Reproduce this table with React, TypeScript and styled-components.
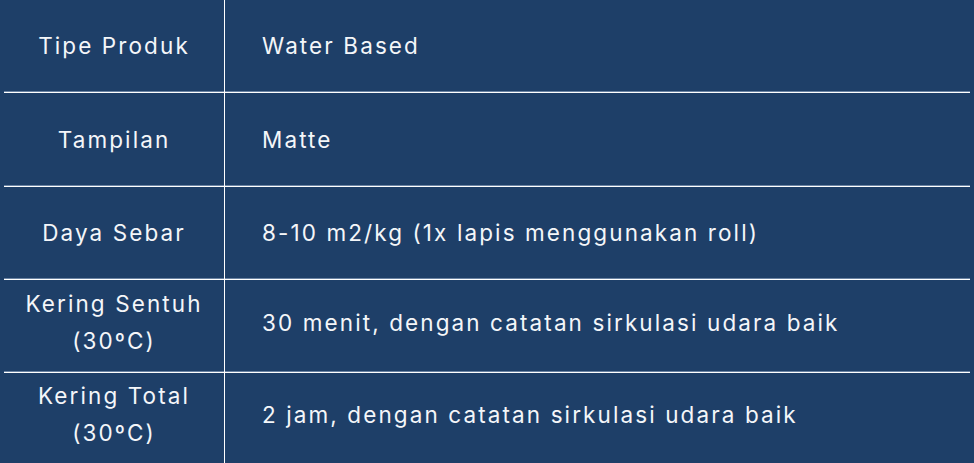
import React from "react";
import styled, { createGlobalStyle } from "styled-components";

const GlobalStyle = createGlobalStyle`
    html, body {
        margin: 0;
        padding: 0;
        background: #1e3f68;
    }
    body {
        font-family: Inter, "Open Sans", sans-serif;
    }
`;

const Page = styled.div`
    width: 974px;
    height: 463px;
    overflow: hidden;
    background: #1e3f68;
    padding-left: 4px;
    box-sizing: border-box;
`;

const Table = styled.div`
    width: 966px;
    display: flex;
    flex-direction: column;
`;

const Row = styled.div<{ $last?: boolean }>`
    display: grid;
    grid-template-columns: 221px 1fr;
    height: 93.3px;
    box-sizing: border-box;
    border-bottom: ${(p) => (p.$last ? "none" : "1px solid #ffffff")};
    box-shadow: ${(p) => (p.$last ? "none" : "inset 0 -1px 0 rgba(200, 215, 235, 0.45)")};
`;

const Label = styled.div<{ $lift: number }>`
    border-right: 1px solid #ffffff;
    display: flex;
    align-items: center;
    justify-content: center;
    text-align: center;
    color: #f4f6f9;
    font-size: 22.5px;
    line-height: 37px;
    letter-spacing: 2.1px;
    padding: 0 12px ${(p) => p.$lift}px;
`;

const Value = styled.div<{ $lift: number }>`
    display: flex;
    align-items: center;
    padding: 0 0 ${(p) => p.$lift}px 37px;
    color: #f4f6f9;
    font-size: 22.5px;
    letter-spacing: 2.1px;
`;

const rows = [
    { label: "Tipe Produk", value: "Water Based", lift: 2 },
    { label: "Tampilan", value: "Matte", lift: 0 },
    { label: "Daya Sebar", value: "8-10 m2/kg (1x lapis menggunakan roll)", lift: 1 },
    { label: "Kering Sentuh (30ºC)", value: "30 menit, dengan catatan sirkulasi udara baik", lift: 8 },
    { label: "Kering Total (30ºC)", value: "2 jam, dengan catatan sirkulasi udara baik", lift: 11 },
];

export default function App() {
    return (
        <Page>
            <GlobalStyle />
            <Table>
                {rows.map((r, i) => (
                    <Row key={r.label} $last={i === rows.length - 1}>
                        <Label $lift={r.lift}>{r.label}</Label>
                        <Value $lift={r.lift}>{r.value}</Value>
                    </Row>
                ))}
            </Table>
        </Page>
    );
}
